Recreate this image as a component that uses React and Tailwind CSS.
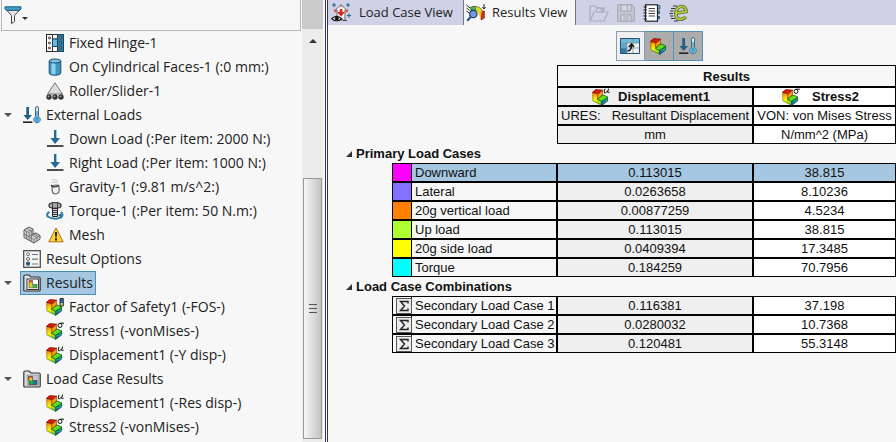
import { useState } from 'react';

function Cube({ mark }) {
  return (
    <svg viewBox="0 0 18 18" className="size-[18px] shrink-0" aria-hidden="true">
      <defs>
        <linearGradient id="heatLeft" x1="0" y1="0" x2="0" y2="1">
          <stop offset="0" stopColor="#ff4a00" />
          <stop offset="0.3" stopColor="#ffc400" />
          <stop offset="0.6" stopColor="#f0f400" />
          <stop offset="1" stopColor="#28b428" />
        </linearGradient>
        <linearGradient id="heatRight" x1="0.6" y1="0" x2="0.4" y2="1">
          <stop offset="0" stopColor="#28c040" />
          <stop offset="0.5" stopColor="#109890" />
          <stop offset="1" stopColor="#1850c0" />
        </linearGradient>
      </defs>
      <path d="M0.6 4.2 L5.5 5.5 L5.5 11.6 L9.6 13.4 V17.4 L0.8 12.8 Z" fill="url(#heatLeft)" stroke="#6a5000" strokeWidth="0.5" />
      <path d="M0.6 4.2 L3.8 1.6 L10.6 2.2 L7.2 5.4 L5.5 5.5 Z" fill="#e01c10" stroke="#7a1000" strokeWidth="0.8" />
      <path d="M5.8 5.6 L7.2 5.4 L10.6 2.2 V6.8 L8.4 8.6 L5.8 11.4 Z" fill="#ff9a10" stroke="#6a4000" strokeWidth="0.6" />
      <path d="M5.6 11.6 L8.6 8.6 L11 7 L15.6 8.8 L15.6 9.6 L9.6 13.4 Z" fill="#60e018" stroke="#1a5a10" strokeWidth="0.8" />
      <path d="M9.6 13.4 L15.6 9.6 V13 L9.6 17.4 Z" fill="url(#heatRight)" stroke="#0a3a5a" strokeWidth="0.7" />
      {mark === 'sigma' && (
        <g fill="none" stroke="#111" strokeWidth="1">
          <ellipse cx="14" cy="3.4" rx="1.9" ry="2.1" />
          <path d="M14 1.2 H18" />
        </g>
      )}
      {mark === 'u' && (
        <path d="M13 0.8 L12.2 3.8 Q12.2 5.4 13.8 4.8 L15.8 2.6 M16.6 0.6 L15.6 4.2 Q15.8 5.4 17.6 4.2" fill="none" stroke="#111" />
      )}
      {mark === 'bar' && (
        <g>
          <path d="M14 0.5 H17.3 V8 H14 Z" fill="#2868b0" stroke="#111" strokeWidth="0.8" />
          <path d="M14.6 5 H16.8 V7.5 H14.6 Z" fill="#e0d020" />
        </g>
      )}
    </svg>
  );
}

function Folder({ small }) {
  return (
    <svg viewBox="0 0 18 18" className="size-[18px] shrink-0" aria-hidden="true">
      <path d="M0.8 16 V2.5 Q0.8 1 2.3 1 H6 L8 3 H15.7 Q17.2 3 17.2 4.5 V16 Q17.2 17 16.2 17 H1.8 Q0.8 17 0.8 16 Z" fill="#e2e2e4" stroke="#333" strokeWidth="1.2" />
      {small ? (
        <g>
          <rect x="4" y="5" width="11.5" height="10.5" fill="#c4c6ca" stroke="#888" strokeWidth="0.6" />
          <path d="M5.5 6.5 H9.5 V10 H5.5 Z" fill="#e86020" />
          <path d="M6.5 8 H9.5 V11 H6.5 Z" fill="#e8d020" />
          <path d="M6 10.5 H10 V14.5 H6 Z" fill="#20a850" />
          <path d="M10 10.5 H14 V14.5 H10 Z" fill="#187898" />
          <path d="M5.5 6.5 H9.5 V10.5 H14 V14.5 H6 V10.5 H5.5 Z" fill="none" stroke="#333" strokeWidth="0.6" />
        </g>
      ) : (
        <g>
          <rect x="4" y="5" width="11.5" height="10.5" fill="#fff" stroke="#333" />
          <path d="M6 6.5 H9.5 V9 H6 Z" fill="#f04818" />
          <path d="M6 8.5 H9.5 V11 H6 Z" fill="#f8c820" />
          <path d="M6 10.5 H10 V13.8 H6 Z" fill="#c8e020" />
          <path d="M9.5 10.5 H14 V13.8 H9.5 Z" fill="#30b858" />
          <path d="M6 6.5 H9.5 V10.5 H14 V13.8 H6 Z" fill="none" stroke="#444" strokeWidth="0.6" />
        </g>
      )}
    </svg>
  );
}

function LoadIcon() {
  return (
    <svg viewBox="0 0 18 18" className="size-[18px] shrink-0" aria-hidden="true">
      <path d="M8 0 H10.4 V8 H14 L9.2 14 L4.4 8 H8 Z" fill="#1f6b94" />
      <path d="M1 16 H17.5" stroke="#222" strokeWidth="1.6" />
    </svg>
  );
}

function LoadsIcon() {
  return (
    <svg viewBox="0 0 18 18" className="size-[18px] shrink-0" aria-hidden="true">
      <path d="M3.3 1 H6 V9 H9 L4.7 14 L0.4 9 H3.3 Z" fill="#1f6088" />
      <path d="M0 16.2 H9.4" stroke="#222" strokeWidth="1.6" />
      <path d="M12.5 10.6 V2 Q12.5 0.6 14 0.6 Q15.5 0.6 15.5 2 V10.6 A3.3 3.3 0 1 1 12.5 10.6 Z" fill="#e4eef4" stroke="#3a6a88" />
      <circle cx="14" cy="13.5" r="2.7" fill="#4aa8d4" />
      <path d="M14 5 V13" stroke="#3a88b0" strokeWidth="1.2" />
    </svg>
  );
}

function HingeIcon() {
  return (
    <svg viewBox="0 0 18 18" className="size-[18px] shrink-0" aria-hidden="true">
      <rect x="0.5" y="0.5" width="6" height="17" fill="#fff" stroke="#222" />
      <rect x="11.5" y="0.5" width="6" height="17" fill="#2b7ba5" stroke="#164a68" />
      <path d="M6.5 0.5 H11.5 V5 H6.5 Z M6.5 12.5 H11.5 V17.5 H6.5 Z" fill="#fff" stroke="#333" />
      <rect x="6.5" y="5" width="5" height="7.5" fill="#6db9dc" stroke="#164a68" />
      <g fill="#bbb" stroke="#222" strokeWidth="0.7">
        <circle cx="3.5" cy="4" r="1.1" />
        <circle cx="3.5" cy="9" r="1.1" />
        <circle cx="3.5" cy="14" r="1.1" />
        <circle cx="14.7" cy="4" r="1.1" />
        <circle cx="14.7" cy="9" r="1.1" />
        <circle cx="14.7" cy="14" r="1.1" />
      </g>
    </svg>
  );
}

function CylinderIcon() {
  return (
    <svg viewBox="0 0 18 18" className="size-[18px] shrink-0" aria-hidden="true">
      <path d="M3.2 3 V14.8 Q3.2 17.2 9 17.2 Q14.8 17.2 14.8 14.8 V3 Z" fill="#3f94c0" stroke="#174f6e" />
      <path d="M5.5 4 H9.5 V16.6 L5.5 16 Z" fill="#8fd0ec" />
      <ellipse cx="9" cy="3" rx="5.8" ry="2" fill="#7cc0de" stroke="#174f6e" />
    </svg>
  );
}

function RollerIcon() {
  return (
    <svg viewBox="0 0 18 18" className="size-[18px] shrink-0" aria-hidden="true">
      <path d="M9 0.8 L16.5 12 H1.5 Z" fill="#dcdcdc" stroke="#777" />
      <g fill="#333">
        <circle cx="3" cy="15" r="2.7" />
        <circle cx="9" cy="15" r="2.7" />
        <circle cx="15" cy="15" r="2.7" />
      </g>
      <g fill="#aaa">
        <circle cx="2.5" cy="14.3" r="0.9" />
        <circle cx="8.5" cy="14.3" r="0.9" />
        <circle cx="14.5" cy="14.3" r="0.9" />
      </g>
    </svg>
  );
}

function GravityIcon() {
  return (
    <svg viewBox="0 0 18 18" className="size-[18px] shrink-0" aria-hidden="true">
      <path d="M5.5 2 Q8 1.2 11.5 2.5 M5.5 4.5 Q8 3.6 12 4.5" fill="none" stroke="#c8c8c8" />
      <path d="M6 8 Q9 6.4 12.8 7.4 L13.2 12 Q13 15.6 9.6 16 Q6.6 16 6.2 13 Z" fill="#f0f0f0" stroke="#666" strokeWidth="1.2" />
      <path d="M5.2 7 Q6.5 10.6 12.8 7.6" fill="none" stroke="#333" strokeWidth="1.3" />
    </svg>
  );
}

function TorqueIcon() {
  return (
    <svg viewBox="0 0 18 18" className="size-[18px] shrink-0" aria-hidden="true">
      <path d="M3.5 10 Q0 11.5 1.6 14.5 Q8 18.4 15 15.4 Q18 12.5 14.8 10" fill="none" stroke="#2f7fa4" strokeWidth="2" />
      <path d="M3 2 L6 0.7 H12 L15 2 V5 L12 6.2 H6 L3 5 Z" fill="#a8a8a8" stroke="#222" />
      <path d="M6.5 1 V6 M11.5 1 V6" stroke="#444" />
      <path d="M6.5 6.5 H11.5 V14.5 H6.5 Z" fill="#ddd" stroke="#222" />
      <path d="M6.5 8.5 H11.5 M6.5 10.5 H11.5 M6.5 12.5 H11.5" stroke="#333" />
      <path d="M12 13 L15.4 11.4 L15.8 16.4 Z" fill="#1f6b94" />
    </svg>
  );
}

function MeshIcon() {
  return (
    <>
      <svg viewBox="0 0 18 18" className="size-[18px] shrink-0" aria-hidden="true">
        <path d="M1 4 L6 1 L10 3 V8 L13 7 L17 9.5 V13 L11 17 L1 11.5 Z" fill="#d4d4d4" stroke="#555" />
        <path d="M1 4 L6 6.5 L10 3 M6 6.5 V14 M1 8 L11 13.5 L17 9.5 M3.5 5.3 V13 M6 10 L13 7 M11 13.5 V17 M14 11.5 V15 M3.5 2.5 L8.3 5 V15 M8.5 9 L14 11.5 M10.5 8 L16 10.5" fill="none" stroke="#666" strokeWidth="0.8" />
      </svg>
      <svg viewBox="0 0 16 16" className="ml-[7px] size-4 shrink-0" aria-hidden="true">
        <path d="M8 1 L15.2 14.8 H0.8 Z" fill="#ffd23c" stroke="#a87010" strokeLinejoin="round" />
        <path d="M7 5 H9 L8.6 10.5 H7.4 Z M7 11.5 H9 V13.5 H7 Z" fill="#111" />
      </svg>
    </>
  );
}

function OptionsIcon() {
  return (
    <svg viewBox="0 0 18 18" className="size-[18px] shrink-0" aria-hidden="true">
      <rect x="0.7" y="0.7" width="16.6" height="16.6" fill="#f4f4f4" stroke="#444" strokeWidth="1.2" />
      <g fill="#fff" stroke="#666">
        <circle cx="5" cy="4.3" r="1.5" />
        <circle cx="5" cy="9" r="1.5" />
      </g>
      <circle cx="5" cy="13.7" r="2.1" fill="#1f5a80" />
      <path d="M9 4.5 H15 M9 9.2 H15 M9 14 H15" stroke="#777" strokeWidth="1.2" />
    </svg>
  );
}

function FilterIcon() {
  return (
    <svg viewBox="0 0 18 18" className="size-[18px] shrink-0" aria-hidden="true">
      <path d="M1.5 3 H16.5 L10.5 9.5 V15.5 L7.5 17.5 V9.5 Z" fill="#e4e4e4" stroke="#444" />
      <path d="M9 9 V16" stroke="#fff" />
      <path d="M1 0.8 H17 V3 L15.5 4.4 H2.5 L1 3 Z" fill="#3f9cc2" stroke="#1c5f80" />
    </svg>
  );
}

function CaseViewIcon() {
  return (
    <svg viewBox="0 0 20 20" className="size-5 shrink-0" aria-hidden="true">
      <path d="M4.5 7 L10 1.5 L15.5 7 H14 V17 H6 V7 Z" fill="#f2f2f2" stroke="#666" />
      <path d="M1 2 H5 M3 0 V4 M15 2 H19 M17 0 V4 M16 12.5 H20 M18 10.5 V14.5" stroke="#1f6b94" strokeWidth="1.2" />
      <path d="M8.7 6 H11.3 V9 H14 L10 13.4 L6 9 H8.7 Z" fill="#dc2818" />
      <path d="M2.5 6 L6 8.5 L3.6 9.4 Z M17.5 6 L14 8.5 L16.4 9.4 Z M9 2.5 H11 L10 4.8 Z" fill="#e04030" />
      <path d="M0.8 15.7 Q5.4 11 10.8 15.7 Q5.4 19.8 0.8 15.7 Z" fill="#fff" stroke="#111" strokeWidth="1.2" />
      <circle cx="5.8" cy="15.5" r="2" fill="#111" />
      <path d="M12 17.5 H16" stroke="#444" />
    </svg>
  );
}

function ResultsViewIcon() {
  return (
    <svg viewBox="0 0 20 18" className="h-[18px] w-5 shrink-0" aria-hidden="true">
      <path d="M4.5 3.5 Q7 2 9.5 2.4 L10.5 7.5 Q8 6 5 7 Z" fill="#38b848" stroke="#224" strokeWidth="0.6" />
      <path d="M9.5 2.4 Q12.5 2.6 14.5 4.6 L13.5 12 Q12.5 8.6 10.5 7.5 Z" fill="#d8e020" />
      <path d="M14.5 4.6 Q16.2 6.2 16.8 8.4 L15 15.4 L13.5 12 Z" fill="#ffb010" />
      <path d="M16.2 8 L18.4 6.8 V14 L15 16 Z" fill="#e03020" stroke="#511" strokeWidth="0.6" />
      <path d="M9.5 2.4 Q16 3 16.8 8.4" fill="none" stroke="#554400" strokeWidth="0.7" />
      <path d="M0.5 1 L4 4 M0.5 4 L3.5 6.4 M0.5 7 L3 8.8 M18 0 V4.6 M16.4 3 L18 5 L19.6 3" fill="none" stroke="#222" />
      <circle cx="7.3" cy="10" r="3.7" fill="#7898d8" stroke="#2a3a68" strokeWidth="1.2" />
      <path d="M4.7 13 L1.2 16.8" stroke="#205890" strokeWidth="2.2" />
    </svg>
  );
}

function OpenIcon() {
  return (
    <svg viewBox="0 0 20 18" className="h-[18px] w-5" fill="none" stroke="#acacba" strokeWidth="1.2" aria-hidden="true">
      <path d="M1 17 V2 H6 L8 4 H15 V7 M1 17 L5 8 H19 L15 17 Z" />
      <path d="M7 7 Q8 2 12 5 L14 7 M14 3 V8 H10" />
    </svg>
  );
}

function SaveIcon() {
  return (
    <svg viewBox="0 0 18 18" className="size-[18px]" aria-hidden="true">
      <path d="M0.7 0.7 H15 L17.3 3 V17.3 H0.7 Z" fill="#c4c4d0" stroke="#a4a4b2" />
      <path d="M4 1 H14 V7 H4 Z M4 11 H14 V17 H4 Z" fill="#d8d8e4" stroke="#a4a4b2" />
      <path d="M10.5 2 V6 M6 13 H12 M6 15 H12" stroke="#a4a4b2" />
    </svg>
  );
}

function NotebookIcon() {
  return (
    <svg viewBox="0 0 18 18" className="size-[18px]" aria-hidden="true">
      <path d="M14 1.5 H17 V5 H14 Z" fill="#60b0d8" stroke="#236" strokeWidth="0.6" />
      <path d="M14 6.5 H17 V10 H14 Z M14 12 H17 V15 H14 Z" fill="#2a6f98" />
      <rect x="2.5" y="0.8" width="12" height="16.4" fill="#fff" stroke="#222" strokeWidth="1.2" />
      <path d="M5.5 4.5 H12 M5.5 7 H12 M5.5 9.5 H12 M5.5 12 H12" stroke="#444" />
      <path d="M0.5 3 H4 M0.5 6 H4 M0.5 9 H4 M0.5 12 H4 M0.5 15 H4" stroke="#222" strokeWidth="1.2" />
    </svg>
  );
}

function EIcon() {
  return (
    <svg viewBox="0 0 20 18" className="h-[18px] w-5" fill="none" aria-hidden="true">
      <path d="M4 2 H8 M2 4.5 H6 M1 7 H4.5 M0.5 9.5 H4 M1 12 H4.5 M2 14.5 H6 M5 17 H9" stroke="#333" />
      <path d="M7.5 9 L17 7.6 Q16.8 2.4 12.4 2.4 Q7 3.2 6.8 9.6 Q7.2 15.4 11.8 15.4 Q15 15.2 16.6 12.6" stroke="#56661c" strokeWidth="3.4" />
      <path d="M7.5 9 L17 7.6 Q16.8 2.4 12.4 2.4 Q7 3.2 6.8 9.6 Q7.2 15.4 11.8 15.4 Q15 15.2 16.6 12.6" stroke="#b6ca44" strokeWidth="1.9" />
    </svg>
  );
}

function TableIcon() {
  return (
    <svg viewBox="0 0 20 18" className="h-[18px] w-5" aria-hidden="true">
      <path d="M0.5 1.5 H19.5 V16.5 H0.5 Z" fill="#f0f0f0" />
      <path d="M0.5 1.5 H19.5 V6 H0.5 Z" fill="#6cbcdc" />
      <path d="M0.5 6 H7 V11 H0.5 Z" fill="#58acd0" />
      <path d="M0.5 11 H7 V16.5 H0.5 Z" fill="#2c7ca4" />
      <path d="M0.5 6 H19.5 M0.5 11 H19.5 M7 1.5 V16.5 M13 1.5 V16.5" fill="none" stroke="#7c98a8" strokeWidth="0.8" />
      <path d="M0.5 1.5 H19.5 V16.5 H0.5 Z" fill="none" stroke="#24506c" />
      <path d="M7.5 14 Q11.5 14 11.5 8 M9 10 L11.5 7 L14 10" fill="none" stroke="#111" strokeWidth="1.5" />
    </svg>
  );
}

function SigmaIcon() {
  return (
    <svg viewBox="0 0 16 16" className="block size-4" aria-hidden="true">
      <rect x="0.5" y="0.5" width="15" height="15" fill="#ececec" stroke="#555" />
      <path d="M12 5.4 V3.5 H4.5 L8.5 8 L4.5 12.5 H12 V10.6" fill="none" stroke="#222" strokeWidth="1.4" />
    </svg>
  );
}

const tree = [
  { label: 'Fixed Hinge-1', icon: <HingeIcon />, child: true },
  { label: 'On Cylindrical Faces-1 (:0 mm:)', icon: <CylinderIcon />, child: true },
  { label: 'Roller/Slider-1', icon: <RollerIcon />, child: true },
  { label: 'External Loads', icon: <LoadsIcon />, open: true },
  { label: 'Down Load (:Per item: 2000 N:)', icon: <LoadIcon />, child: true },
  { label: 'Right Load (:Per item: 1000 N:)', icon: <LoadIcon />, child: true },
  { label: 'Gravity-1 (:9.81 m/s^2:)', icon: <GravityIcon />, child: true },
  { label: 'Torque-1 (:Per item: 50 N.m:)', icon: <TorqueIcon />, child: true },
  { label: 'Mesh', icon: <MeshIcon /> },
  { label: 'Result Options', icon: <OptionsIcon /> },
  { label: 'Results', icon: <Folder />, open: true },
  { label: 'Factor of Safety1 (-FOS-)', icon: <Cube mark="bar" />, child: true },
  { label: 'Stress1 (-vonMises-)', icon: <Cube mark="sigma" />, child: true },
  { label: 'Displacement1 (-Y disp-)', icon: <Cube mark="u" />, child: true },
  { label: 'Load Case Results', icon: <Folder small />, open: true },
  { label: 'Displacement1 (-Res disp-)', icon: <Cube mark="u" />, child: true },
  { label: 'Stress2 (-vonMises-)', icon: <Cube mark="sigma" />, child: true },
];

const primary = [
  { name: 'Downward', color: 'bg-[#ff00ff]', disp: '0.113015', stress: '38.815' },
  { name: 'Lateral', color: 'bg-[#8470ff]', disp: '0.0263658', stress: '8.10236' },
  { name: '20g vertical load', color: 'bg-[#ff8000]', disp: '0.00877259', stress: '4.5234' },
  { name: 'Up load', color: 'bg-[#adff2f]', disp: '0.113015', stress: '38.815' },
  { name: '20g side load', color: 'bg-[#ffff00]', disp: '0.0409394', stress: '17.3485' },
  { name: 'Torque', color: 'bg-[#00ffff]', disp: '0.184259', stress: '70.7956' },
];

const combinations = [
  { name: 'Secondary Load Case 1', disp: '0.116381', stress: '37.198' },
  { name: 'Secondary Load Case 2', disp: '0.0280032', stress: '10.7368' },
  { name: 'Secondary Load Case 3', disp: '0.120481', stress: '55.3148' },
];

function Sidebar() {
  const [selected, setSelected] = useState('Results');

  return (
    <aside className="flex w-[326px] shrink-0 border-r border-[#33335a] bg-[#f7f7f7]">
      <div className="min-w-0 flex-1">
        <div className="mx-px flex h-[31px] items-start border-x border-b border-[#b8b8b8] pt-[6px] pl-[2px]">
          <button type="button" aria-label="Filter" className="flex items-end">
            <FilterIcon />
            <span className="mb-1 border-x-[3px] border-t-[3px] border-x-transparent border-t-[#333]" />
          </button>
        </div>
        <ul>
          {tree.map((item, index) => (
            <li key={index} className={item.child ? 'flex h-6 items-center pl-[43px]' : 'flex h-6 items-center pl-1'}>
              {!item.child && (
                <span className="flex w-4 shrink-0">
                  {item.open && <span className="border-x-4 border-t-4 border-x-transparent border-t-[#555]" />}
                </span>
              )}
              <button
                type="button"
                onClick={() => setSelected(item.label)}
                className={
                  selected === item.label
                    ? 'flex h-6 items-center border border-[#4a90bd] bg-[#a5c7e1] px-[2px]'
                    : 'flex h-6 items-center border border-transparent px-[2px]'
                }
              >
                {item.icon}
                <span className="ml-[5px] whitespace-nowrap">{item.label}</span>
              </button>
            </li>
          ))}
        </ul>
      </div>
      {/* Scroll bar */}
      <div className="mr-[2px] flex w-[21px] flex-col items-center bg-[#ececec]">
        <div className="h-[29px] w-full bg-[#cacaca]" />
        <div className="mt-[10px] border-x-4 border-b-4 border-x-transparent border-b-[#333]" />
        <div className="mt-auto mb-[3px] flex h-[59%] w-[19px] flex-col items-center justify-center gap-[3px] border border-[#999] bg-linear-to-r from-[#f6f6f6] to-[#c4c4c8]">
          <span className="h-px w-2 bg-[#555]" />
          <span className="h-px w-2 bg-[#555]" />
          <span className="h-px w-2 bg-[#555]" />
        </div>
      </div>
    </aside>
  );
}

function SectionRow({ title }) {
  return (
    <tr className="h-[19px]">
      <th colSpan={5} className="p-0 pl-[18px] text-left">
        <span className="flex items-center gap-1">
          <svg viewBox="0 0 6 6" className="size-[6px]" aria-hidden="true">
            <path d="M6 0 V6 H0 Z" fill="#333" />
          </svg>
          {title}
        </span>
      </th>
    </tr>
  );
}

function CaseRow({ row, active, onSelect }) {
  const fill = active ? 'bg-[#a5c7e1]' : '';
  return (
    <tr className="h-[19px]" onClick={onSelect}>
      <td className="p-0" />
      <td className={`border border-r-0 border-black p-0 ${row.color || 'pl-[3px]'}`}>{!row.color && <SigmaIcon />}</td>
      <td className={`border border-black p-0 pl-[3px] whitespace-nowrap ${fill}`}>{row.name}</td>
      <td className={`border border-black p-0 text-center ${fill || 'bg-[#efefef]'}`}>{row.disp}</td>
      <td className={`border border-black p-0 text-center ${fill || 'bg-white'}`}>{row.stress}</td>
    </tr>
  );
}

function ResultsTable() {
  const [active, setActive] = useState('Downward');

  return (
    <table className="w-full table-fixed border-separate border-spacing-0 font-['Liberation_Sans',Arial,sans-serif] text-[13px] leading-[17px] text-[#111]">
      <colgroup>
        <col className="w-16" />
        <col className="w-[19px]" />
        <col className="w-[146px]" />
        <col className="w-[196px]" />
        <col />
      </colgroup>
      <thead>
        <tr className="h-[22px]">
          <td colSpan={3} />
          <th colSpan={2} className="border border-black p-0">Results</th>
        </tr>
        <tr className="h-[19px]">
          <td colSpan={3} className="p-0" />
          <th className="border border-black bg-[#efefef] p-0">
            <span className="flex h-[17px] items-center justify-center gap-2 pr-2">
              <Cube mark="u" />
              Displacement1
            </span>
          </th>
          <th className="border border-black bg-white p-0">
            <span className="flex h-[17px] items-center justify-center gap-3 pr-2">
              <Cube mark="sigma" />
              Stress2
            </span>
          </th>
        </tr>
        <tr className="h-[19px]">
          <td colSpan={3} className="p-0" />
          <td className="border border-black bg-[#efefef] p-0">
            <span className="flex justify-between px-[3px] whitespace-nowrap">
              <span>URES:</span>
              <span>Resultant Displacement</span>
            </span>
          </td>
          <td className="border border-black bg-white p-0 text-center whitespace-nowrap">VON: von Mises Stress</td>
        </tr>
        <tr className="h-[19px]">
          <td colSpan={3} className="p-0" />
          <td className="border border-black bg-[#efefef] p-0 text-center">mm</td>
          <td className="border border-black bg-white p-0 text-center">N/mm^2 (MPa)</td>
        </tr>
      </thead>
      <tbody>
        <SectionRow title="Primary Load Cases" />
        {primary.map((row) => (
          <CaseRow key={row.name} row={row} active={active === row.name} onSelect={() => setActive(row.name)} />
        ))}
        <SectionRow title="Load Case Combinations" />
        {combinations.map((row) => (
          <CaseRow key={row.name} row={row} active={active === row.name} onSelect={() => setActive(row.name)} />
        ))}
      </tbody>
    </table>
  );
}

export default function App() {
  return (
    <div className="flex min-h-screen bg-white font-['Open_Sans','Noto_Sans',sans-serif] text-sm text-[#222]">
      <Sidebar />
      <main className="ml-px min-w-0 flex-1 border-l border-[#33335a] bg-[#f7f7f7]">
        {/* Tabs */}
        <div className="flex h-[25px] items-stretch bg-[#cfd1e7] text-[13px]">
          <button type="button" className="flex w-[136px] items-center gap-2 border-r border-[#777] pl-[3px] whitespace-nowrap">
            <CaseViewIcon />
            Load Case View
          </button>
          <button type="button" className="flex w-[112px] items-center gap-[6px] border-r border-[#777] bg-[#f7f7f7] pl-[2px] whitespace-nowrap">
            <ResultsViewIcon />
            Results View
          </button>
          <div className="ml-[13px] flex items-center gap-2">
            <button type="button" aria-label="Open"><OpenIcon /></button>
            <button type="button" aria-label="Save"><SaveIcon /></button>
            <button type="button" aria-label="Report"><NotebookIcon /></button>
            <button type="button" aria-label="eDrawings"><EIcon /></button>
          </div>
        </div>

        {/* View toggles */}
        <div className="mt-[6px] mb-1 flex h-[30px] justify-center pl-[94px]">
          <div className="flex">
            <button type="button" aria-label="Table" className="flex w-[29px] items-center justify-center border border-[#8a9aa8] bg-[#f0f0f4]">
              <TableIcon />
            </button>
            <button type="button" aria-label="Plots" className="flex w-[29px] items-center justify-center border border-l-0 border-[#5590b8] bg-[#acacac]">
              <Cube />
            </button>
            <button type="button" aria-label="Loads" className="flex w-[29px] items-center justify-center border border-l-0 border-[#5590b8] bg-[#acacac]">
              <LoadsIcon />
            </button>
          </div>
        </div>

        <ResultsTable />
      </main>
    </div>
  );
}
